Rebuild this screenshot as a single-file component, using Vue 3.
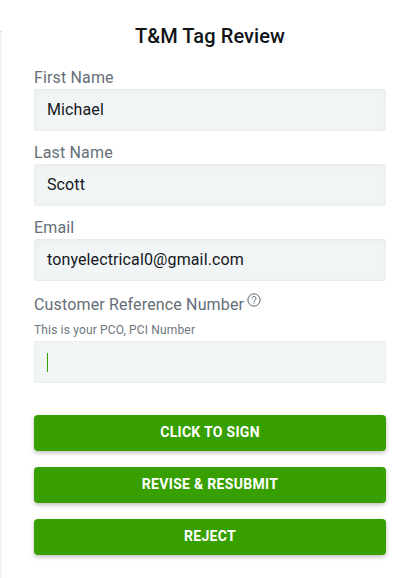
<script setup>
const fields = [
  { label: 'First Name', value: 'Michael' },
  { label: 'Last Name', value: 'Scott' },
  { label: 'Email', value: 'tonyelectrical0@gmail.com' },
]
const actions = ['Click to sign', 'Revise & Resubmit', 'Reject']
</script>

<template>
  <div class="page">
    <aside class="edge"><div class="edge-top"></div></aside>
    <main class="form">
      <h1 class="title">T&amp;M Tag Review</h1>
      <div v-for="f in fields" :key="f.label" class="field">
        <label class="label">{{ f.label }}</label>
        <div class="input filled">{{ f.value }}</div>
      </div>
      <div class="field ref">
        <label class="label">Customer Reference Number<svg class="help" viewBox="0 0 24 24" width="14" height="14" fill="none" stroke="#56616c" stroke-width="1.7">
            <circle cx="12" cy="12" r="10.5" />
            <path d="M8.6 9.4a3.4 3.4 0 1 1 5.5 2.6c-1.4 1-2.1 1.6-2.1 3" />
            <path d="M12 16.4v2" />
          </svg></label>
        <div class="hint">This is your PCO, PCI Number</div>
        <div class="input"><span class="caret"></span></div>
      </div>
      <div class="actions">
        <button v-for="a in actions" :key="a" class="btn" type="button">{{ a }}</button>
      </div>
    </main>
  </div>
</template>

<style>
html, body { margin: 0; background: #fff; }
</style>

<style scoped>
.page {
  display: flex;
  width: 413px;
  height: 578px;
  overflow: hidden;
  background: #fff;
  font-family: Roboto, "Liberation Sans", sans-serif;
}
.edge {
  width: 2px;
  flex: none;
  background: #f5f5f5;
}
.edge-top {
  height: 31px;
  background: #fff;
  border-bottom: 1px solid #d9d9d9;
}
.form {
  width: 352px;
  margin-left: 32px;
  display: flex;
  flex-direction: column;
}
.title {
  margin: 24px 0 0;
  height: 24px;
  line-height: 24px;
  font-size: 20px;
  font-weight: 500;
  letter-spacing: 0.1px;
  color: #101418;
  text-align: center;
}
.field {
  display: flex;
  flex-direction: column;
  margin-top: 13px;
}
.title + .field { margin-top: 21px; }
.field.ref { margin-top: 15px; }
.label {
  display: block;
  height: 18px;
  line-height: 18px;
  margin-bottom: 2px;
  font-size: 16px;
  letter-spacing: 0.15px;
  color: #646e78;
  white-space: nowrap;
}
.ref .label { margin-bottom: 9px; }
.help {
  vertical-align: top;
  margin-top: -3px;
  margin-left: 3px;
}
.hint {
  height: 14px;
  line-height: 14px;
  margin-bottom: 4px;
  font-size: 12px;
  letter-spacing: 0.15px;
  color: #6e7780;
}
.input {
  box-sizing: border-box;
  height: 42px;
  padding: 0 12px;
  display: flex;
  align-items: center;
  background: #f2f5f6;
  border: 1px solid #e9edee;
  border-radius: 2px;
  font-size: 16px;
  letter-spacing: 0.12px;
  color: #14181c;
}
.filled {
  padding-bottom: 2px;
  box-shadow: inset 1px 1px 6px rgba(0, 0, 0, 0.035);
}
.caret {
  width: 1px;
  height: 19px;
  background: #37a000;
}
.actions {
  margin-top: 32px;
  display: flex;
  flex-direction: column;
  gap: 16px;
}
.btn {
  height: 36px;
  padding: 0 0 2px;
  border: 0;
  border-radius: 4px;
  background: #37a000;
  color: #fff;
  font-family: inherit;
  font-size: 14px;
  font-weight: 700;
  letter-spacing: 0.3px;
  text-transform: uppercase;
  box-shadow: 0 2px 4px rgba(0, 0, 0, 0.25);
}
</style>
